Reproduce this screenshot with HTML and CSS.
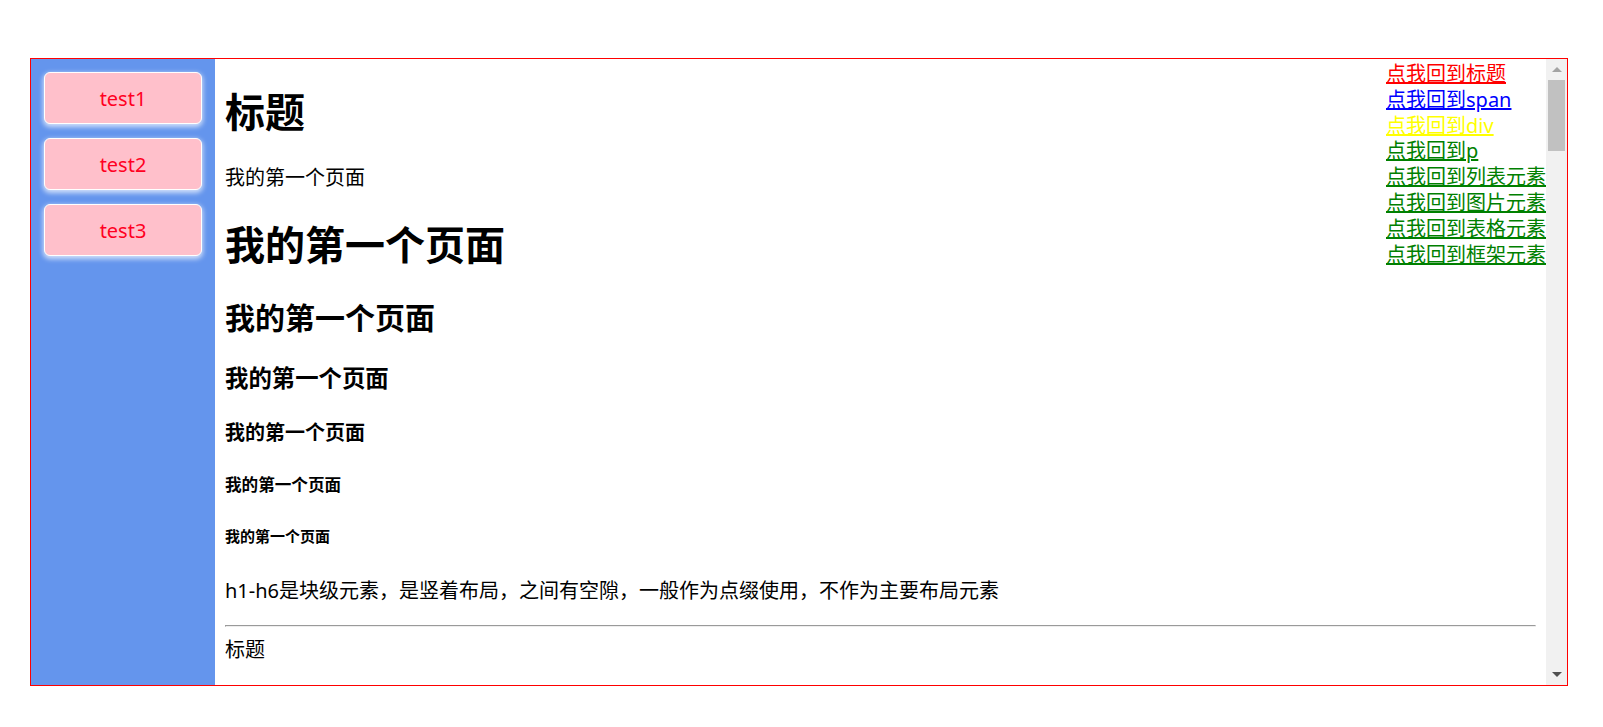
FILE: index.html
```html
<!DOCTYPE html>
<html lang="zh-CN">
<head>
<meta charset="utf-8">
<title>我的第一个页面</title>
<link rel="stylesheet" href="styles.css">
</head>
<body>
<div class="frame">
  <aside class="sidebar">
    <button class="side-btn">test1</button>
    <button class="side-btn">test2</button>
    <button class="side-btn">test3</button>
  </aside>
  <main class="content">
    <h1 id="title">标题</h1>
    <p>我的第一个页面</p>
    <h1>我的第一个页面</h1>
    <h2>我的第一个页面</h2>
    <h3>我的第一个页面</h3>
    <h4>我的第一个页面</h4>
    <h5>我的第一个页面</h5>
    <h6>我的第一个页面</h6>
    <p>h1-h6是块级元素，是竖着布局，之间有空隙，一般作为点缀使用，不作为主要布局元素</p>
    <hr>
    <div class="plain">标题</div>
  </main>
  <div class="scrollbar" aria-hidden="true">
    <div class="sb-btn sb-up"><span class="tri tri-up"></span></div>
    <div class="sb-track"><div class="sb-thumb"></div></div>
    <div class="sb-btn sb-down"><span class="tri tri-down"></span></div>
  </div>
  <nav class="jump">
    <a class="c-red" href="#title">点我回到标题</a>
    <a class="c-blue" href="#span">点我回到span</a>
    <a class="c-yellow" href="#div">点我回到div</a>
    <a class="c-green" href="#p">点我回到p</a>
    <a class="c-green" href="#list">点我回到列表元素</a>
    <a class="c-green" href="#img">点我回到图片元素</a>
    <a class="c-green" href="#table">点我回到表格元素</a>
    <a class="c-green" href="#frame">点我回到框架元素</a>
  </nav>
</div>
</body>
</html>
```

FILE: styles.css
```css
html, body {
  margin: 0;
  padding: 0;
  background: #fff;
}
body {
  padding: 8px;
  font-family: "Noto Sans", "Noto Sans CJK SC", sans-serif;
  font-size: 20px;
  line-height: 1.32;
  color: #000;
}
.frame {
  position: relative;
  box-sizing: border-box;
  width: 1538px;
  height: 628px;
  margin: 50px 0 0 22px;
  border: 1px solid #ff0000;
  display: flex;
}
.sidebar {
  flex: 0 0 184px;
  box-sizing: border-box;
  background: #6495ed;
  padding: 13px 13px 0 13px;
  display: flex;
  flex-direction: column;
  gap: 14px;
}
.side-btn {
  box-sizing: border-box;
  width: 158px;
  height: 52px;
  background: #ffc0cb;
  border: 1px solid #ffffff;
  border-radius: 6px;
  box-shadow: 0 2px 5px 1px rgba(255, 255, 255, 0.7);
  color: #ff0022;
  font-family: "Noto Sans", "Noto Sans CJK SC", sans-serif;
  font-size: 20px;
  padding: 0;
  cursor: pointer;
}
.content {
  flex: 1 1 auto;
  min-width: 0;
  overflow: hidden;
  padding: 0 10px;
}
.content h1, .content h2, .content h3,
.content h4, .content h5, .content h6 {
  font-weight: bold;
}
.content h6 {
  font-size: 15px;
  margin: 31.2px 0;
}
.plain {
  margin: 0;
}
.scrollbar {
  flex: 0 0 21px;
  display: flex;
  flex-direction: column;
  background: #f1f1f1;
}
.sb-btn {
  flex: 0 0 21px;
  display: flex;
  align-items: center;
  justify-content: center;
}
.sb-track {
  flex: 1 1 auto;
  padding: 0 2px;
}
.sb-thumb {
  height: 71px;
  background: #c1c1c1;
}
.tri {
  width: 0;
  height: 0;
  border-left: 5px solid transparent;
  border-right: 5px solid transparent;
}
.tri-up {
  border-bottom: 5px solid #a3a3a3;
}
.tri-down {
  border-top: 5px solid #505050;
}
.jump {
  position: absolute;
  top: 2px;
  right: 21px;
  display: flex;
  flex-direction: column;
  align-items: flex-start;
  line-height: 25.8px;
  font-size: 20px;
}
.jump a {
  text-decoration: underline;
}
.c-red { color: #ff0000; }
.c-blue { color: #0000ff; }
.c-yellow { color: #ffff00; }
.c-green { color: #008000; }
```
